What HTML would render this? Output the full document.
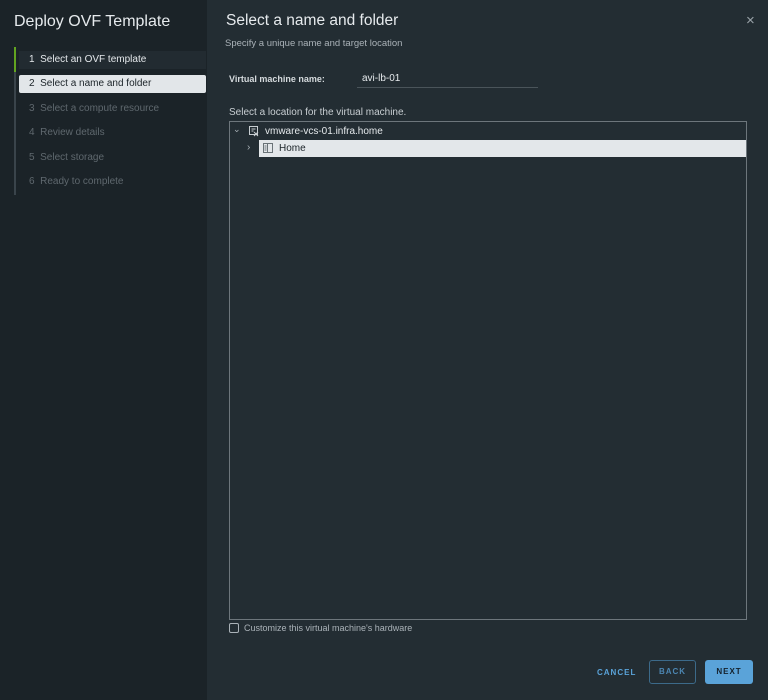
<!DOCTYPE html>
<html><head><style>
*{margin:0;padding:0;box-sizing:border-box}
body{width:768px;height:700px;background:#232d33;font-family:"Liberation Sans",sans-serif;position:relative;overflow:hidden;color:#e8ecef}
.left{position:absolute;left:0;top:0;width:207px;height:700px;background:#1b2328}
.a{position:absolute;white-space:nowrap}
.step{position:absolute;left:19px;width:187px;height:18px;font-size:10px;line-height:18px;padding-left:10px}
</style></head><body>
<div class="left">
<div class="a" style="left:14px;top:13px;font-size:16px;color:#e6eaed">Deploy OVF Template</div>
<div class="a" style="left:14px;top:47px;width:2px;height:148px;background:#3a444b"></div>
<div class="a" style="left:14px;top:47px;width:2px;height:25px;background:#62a420"></div>
<div class="step" style="top:51px;background:#222b31;color:#e4e8eb">1&nbsp;&nbsp;Select an OVF template</div>
<div class="step" style="top:75px;background:#e2e6e9;color:#1b2328;border-radius:2px">2&nbsp;&nbsp;Select a name and folder</div>
<div class="step" style="top:100px;color:#5f686e">3&nbsp;&nbsp;Select a compute resource</div>
<div class="step" style="top:124px;color:#5f686e">4&nbsp;&nbsp;Review details</div>
<div class="step" style="top:149px;color:#5f686e">5&nbsp;&nbsp;Select storage</div>
<div class="step" style="top:173px;color:#5f686e">6&nbsp;&nbsp;Ready to complete</div>
</div>
<div class="a" style="left:226px;top:12px;font-size:15.5px;color:#e6eaed">Select a name and folder</div>
<div class="a" style="left:746px;top:12px;font-size:15px;color:#9aa3a9">×</div>
<div class="a" style="left:225px;top:38px;font-size:9.5px;color:#aab2b8">Specify a unique name and target location</div>
<div class="a" style="left:229px;top:74px;font-size:9px;font-weight:bold;color:#d5dadd">Virtual machine name:</div>
<div class="a" style="left:362px;top:73px;font-size:10px;color:#e6eaed">avi-lb-01</div>
<div class="a" style="left:357px;top:87px;width:181px;height:1px;background:#4a545a"></div>
<div class="a" style="left:229px;top:107px;font-size:10px;color:#c8ced2">Select a location for the virtual machine.</div>
<div class="a" style="left:229px;top:121px;width:518px;height:499px;border:1px solid #6d767c"></div>
<div class="a" style="left:233px;top:124px;font-size:9px;color:#aab2b8">⌄</div>
<svg class="a" style="left:248px;top:125px" width="12" height="12" viewBox="0 0 12 12" fill="none" stroke="#c8ced2" stroke-width="1"><rect x="1.5" y="1.5" width="8" height="8"/><path d="M3.5 4h4M3.5 6h2M6 7l4 4M10 7l-4 4"/></svg>
<div class="a" style="left:265px;top:126px;font-size:10px;color:#e6eaed">vmware-vcs-01.infra.home</div>
<div class="a" style="left:247px;top:142px;font-size:10px;color:#aab2b8">›</div>
<div class="a" style="left:259px;top:140px;width:487px;height:17px;background:#e3e7ea"></div>
<svg class="a" style="left:262px;top:142px" width="12" height="12" viewBox="0 0 12 12" fill="none" stroke="#6a7378" stroke-width="1"><rect x="1.5" y="1.5" width="9" height="9"/><path d="M5.5 1.5v9M2.5 4h2M2.5 6h2M2.5 8h2"/></svg>
<div class="a" style="left:279px;top:143px;font-size:10px;color:#1b2328">Home</div>
<div class="a" style="left:229px;top:623px;width:10px;height:10px;border:1px solid #aab2b8;border-radius:2px"></div>
<div class="a" style="left:244px;top:623px;font-size:9px;color:#aab2b8">Customize this virtual machine's hardware</div>
<div class="a" style="left:597px;top:668px;font-size:8px;font-weight:bold;letter-spacing:1px;color:#5aa3d9">CANCEL</div>
<div class="a" style="left:649px;top:660px;width:47px;height:24px;border:1px solid #3c6a8a;border-radius:3px;font-size:8px;font-weight:bold;letter-spacing:1px;color:#4c86b2;text-align:center;line-height:22px">BACK</div>
<div class="a" style="left:705px;top:660px;width:48px;height:24px;background:#5aa3d9;border-radius:3px;font-size:8px;font-weight:bold;letter-spacing:1px;color:#14212b;text-align:center;line-height:24px">NEXT</div>
</body></html>
